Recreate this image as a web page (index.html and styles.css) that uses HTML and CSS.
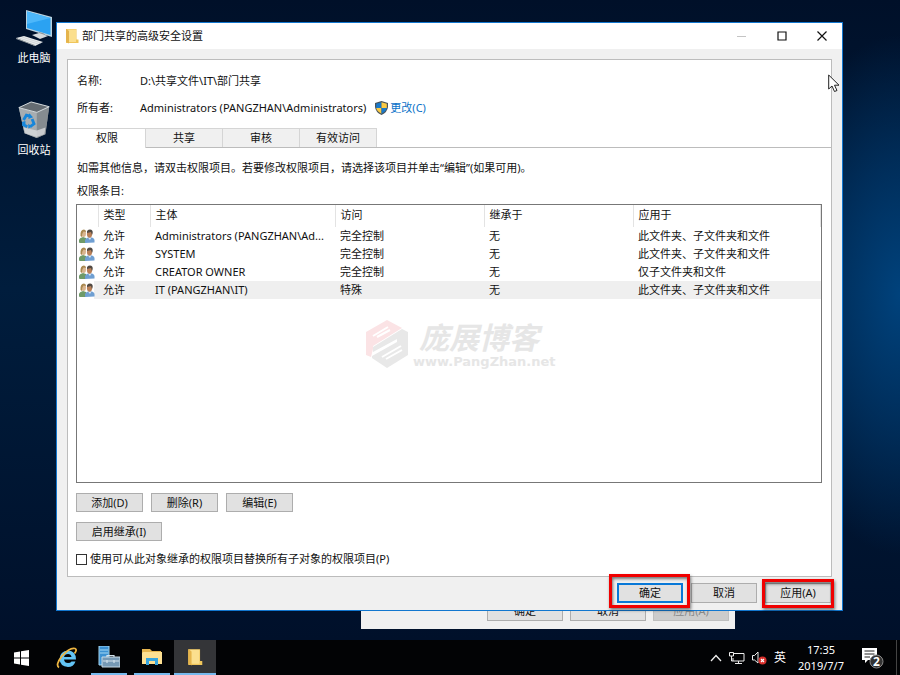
FILE: index.html
```html
<!DOCTYPE html>
<html lang="zh-CN">
<head>
  <meta charset="utf-8">
  <title>部门共享的高级安全设置</title>
  <link rel="stylesheet" href="styles.css">
</head>
<body>
  <svg class="defs" aria-hidden="true">
    <symbol id="users" viewBox="0 0 16 14">
      <path d="M0 13.500V10.500Q1 8.500 4 8L7 9V14H1Z" fill="#6f9a68"/>
      <ellipse cx="4.500" cy="4.500" rx="2.500" ry="3.500" fill="#d9b58f"/>
      <path d="M1.500 7Q1 .500 5 .500Q7 .800 7 3L4.500 2.500Q3 4 3 8Z" fill="#a98950"/>
      <path d="M6 14V11Q7 8.500 11 8Q15 8.500 15.500 11V13.500Z" fill="#6f9fd2"/>
      <path d="M9 8.500L11 11L12.500 8.300Z" fill="#dce8f4"/>
      <ellipse cx="10.500" cy="5" rx="2.600" ry="3.700" fill="#b98058"/>
      <path d="M8 4Q7.500 .500 11 .500Q14 .800 13.700 4L13 6L12 3Z" fill="#514942"/>
    </symbol>
    <symbol id="folder" viewBox="0 0 14 16">
      <path d="M1 1H11.500V11.500H13.500V15H1Z" fill="#f0c65b"/>
      <path d="M1 1L4 2V15.500L1 14Z" fill="#e5b44c"/>
      <path d="M2 1.500H11V14H4V3Z" fill="#fbdf8e"/>
    </symbol>
  </svg>

  <main class="desktop">
    <nav class="shortcuts">
      <a href="#" class="shortcut">
        <svg width="38" height="38" viewBox="0 0 38 38">
          <path d="M11 1L37 8V28L11 20Z" fill="#b9d2df"/>
          <path d="M12 2.500L35.500 9V26L12 19Z" fill="#2ba2f2"/>
          <path d="M12 2.500L35.500 9L12 15Z" fill="#4db7fa"/>
          <path d="M24 23L29 24.500V28L24 27Z" fill="#8b9297"/>
          <path d="M17 26L24 24L33 27L25 30Z" fill="#d6dadd"/>
          <path d="M1 29L9 27L28 33L20 37Z" fill="#e9eced"/>
          <path d="M4 29L23 35M7 28L26 34" stroke="#c3c8cb" stroke-width=".6"/>
          <path d="M1 29V30L20 37V36Z" fill="#8f979b"/>
        </svg>
        <span>此电脑</span>
      </a>
      <a href="#" class="shortcut">
        <svg width="34" height="38" viewBox="0 0 34 40">
          <path d="M1 7L14 1L33 6L29 35L20 39L7 34Z" fill="#8d9499"/>
          <path d="M1 7L20 12L20 39L7 34Z" fill="#a7adb1"/>
          <path d="M20 12L33 6L29 35L20 39Z" fill="#858c91"/>
          <path d="M1 7L14 1L33 6L20 12Z" fill="#656c72" stroke="#d7dddf"/>
          <path d="M6 28L20 31L29 28L28 35L20 38L8 34Z" fill="#d7dadd" opacity=".8"/>
          <g fill="none" stroke="#1786da" stroke-width="3">
            <path d="M6 20L9 15L13 16"/><path d="M15 19L17 24L13 27"/><path d="M10 27L6 25L6 22"/>
          </g>
          <path d="M12 13L16 17L11 19ZM15 27L11 29V24ZM4 22L8 21L8 25Z" fill="#1786da"/>
        </svg>
        <span>回收站</span>
      </a>
    </nav>

    <section class="window properties">
      <button type="button">确定</button>
      <button type="button">取消</button>
      <button type="button" disabled>应用(A)</button>
    </section>

    <section class="window security">
      <header class="titlebar">
        <svg width="14" height="16"><use href="#folder"/></svg>
        <h1>部门共享的高级安全设置</h1>
        <div class="caption">
          <button type="button" aria-label="最小化" disabled><svg width="10" height="10" viewBox="0 0 10 10"><path d="M0 5.500H9" stroke="#c4c4c4"/></svg></button>
          <button type="button" aria-label="最大化"><svg width="10" height="10" viewBox="0 0 10 10"><path d="M1 1H9V9H1Z" fill="none" stroke="#111" stroke-width="1.200"/></svg></button>
          <button type="button" aria-label="关闭"><svg width="10" height="10" viewBox="0 0 10 10"><path d="M.500 .500L9.500 9.500M9.500 .500L.500 9.500" stroke="#111" stroke-width="1.200"/></svg></button>
        </div>
      </header>

      <div class="panel">
        <dl class="info">
          <dt>名称:</dt>
          <dd>D:\共享文件\IT\部门共享</dd>
          <dt>所有者:</dt>
          <dd>
            Administrators (PANGZHAN\Administrators)
            <a href="#" class="change">
              <svg width="13" height="14" viewBox="0 0 13 14">
                <path d="M6.500 0L13 2V6Q12.500 11 6.500 14Q.500 11 0 6V2Z" fill="#49545b"/>
                <path d="M6.500 1.200L1.200 2.800V7H6.500Z" fill="#1979ca"/>
                <path d="M6.500 1.200L11.800 2.800V7H6.500Z" fill="#fbca43"/>
                <path d="M1.200 7H6.500V12.700Q2 10.500 1.200 7Z" fill="#fbca43"/>
                <path d="M11.800 7H6.500V12.700Q11 10.500 11.800 7Z" fill="#1979ca"/>
              </svg>更改(C)</a>
          </dd>
        </dl>

        <div class="tabs" role="tablist">
          <button type="button" role="tab" aria-selected="true">权限</button>
          <button type="button" role="tab">共享</button>
          <button type="button" role="tab">审核</button>
          <button type="button" role="tab">有效访问</button>
        </div>

        <div class="content">
          <p>如需其他信息，请双击权限项目。若要修改权限项目，请选择该项目并单击“编辑”(如果可用)。</p>
          <p>权限条目:</p>
          <div class="list">
            <table>
              <thead>
                <tr><th class="col-icon"></th><th class="col-type">类型</th><th class="col-name">主体</th><th class="col-mid">访问</th><th class="col-mid">继承于</th><th>应用于</th></tr>
              </thead>
              <tbody>
                <tr><td><svg width="16" height="14"><use href="#users"/></svg></td><td>允许</td><td>Administrators (PANGZHAN\Ad...</td><td>完全控制</td><td>无</td><td>此文件夹、子文件夹和文件</td></tr>
                <tr><td><svg width="16" height="14"><use href="#users"/></svg></td><td>允许</td><td>SYSTEM</td><td>完全控制</td><td>无</td><td>此文件夹、子文件夹和文件</td></tr>
                <tr><td><svg width="16" height="14"><use href="#users"/></svg></td><td>允许</td><td>CREATOR OWNER</td><td>完全控制</td><td>无</td><td>仅子文件夹和文件</td></tr>
                <tr class="selected"><td><svg width="16" height="14"><use href="#users"/></svg></td><td>允许</td><td>IT (PANGZHAN\IT)</td><td>特殊</td><td>无</td><td>此文件夹、子文件夹和文件</td></tr>
              </tbody>
            </table>
            <div class="watermark">
              <svg width="42" height="48" viewBox="0 0 42 48">
                <path d="M0 12L21 0L36 8L7 26V29L5 37L0 35Z" fill="#fbe3e5"/>
                <path d="M42 12V35L21 48L6 38V36L31 22V19L7 32V27L36 9Z" fill="#e8e8e8"/>
                <path d="M7 16L22 7M11 17L24 10" stroke="#fff" stroke-width="2"/>
                <path d="M16 37L35 26M20 39L36 30" stroke="#fff" stroke-width="2"/>
              </svg>
              <div>
                <strong>庞展博客</strong>
                <span>www.PangZhan.net</span>
              </div>
            </div>
          </div>

          <div class="actions">
            <button type="button">添加(D)</button>
            <button type="button">删除(R)</button>
            <button type="button">编辑(E)</button>
          </div>
          <div class="actions">
            <button type="button" class="wide">启用继承(I)</button>
          </div>
          <label class="replace"><input type="checkbox">使用可从此对象继承的权限项目替换所有子对象的权限项目(P)</label>
        </div>
      </div>

      <footer class="buttons">
        <span class="mark mark-ok"><button type="button" class="default">确定</button></span>
        <button type="button">取消</button>
        <span class="mark"><button type="button">应用(A)</button></span>
      </footer>
    </section>

    <svg class="cursor" width="13" height="19" viewBox="0 0 13 19">
      <path d="M.700 1V15L4 12L6.500 17.500L9 16.500L6.500 11.200H11Z" fill="#fff" stroke="#222"/>
    </svg>
  </main>

  <footer class="taskbar">
    <button type="button" class="task" aria-label="开始">
      <svg width="15" height="16" viewBox="0 0 15 16"><path d="M0 2.500L6 1.500V7.500H0ZM7 1.300L15 0V7.500H7ZM0 8.500H6V14.500L0 13.500ZM7 8.500H15V16L7 14.700Z" fill="#fff"/></svg>
    </button>
    <button type="button" class="task ie" aria-label="Internet Explorer">
      <svg width="22" height="22" viewBox="0 0 22 22">
        <path d="M20 12.500H8Q8.500 16 12 16Q14.500 16 15.500 14.500H19.500Q17.500 20 12 20Q4 19.500 3.500 12Q4 4 12 3.500Q20 4 20 12.500ZM8 10H15.500Q15 7 12 7Q8.700 7 8 10Z" fill="#63c4f5"/>
        <path d="M3 20.500Q-1 18 6 9Q14 0 19 1.500Q21.500 2.500 18.500 6.500" fill="none" stroke="#eeb642" stroke-width="1.800"/>
      </svg>
    </button>
    <button type="button" class="task open" aria-label="服务器管理器">
      <svg width="22" height="22" viewBox="0 0 22 22">
        <path d="M1 0H11V19H1Z" fill="#3c91d2"/>
        <path d="M1 0H11V19H1ZM2 4H10M2 7H10" fill="none" stroke="#a4d8f4"/>
        <path d="M4 11H22V21H4Z" fill="#7699b5" stroke="#c7d9e5"/>
        <path d="M9 11V9.500H16V11M5 15H21M9 14V17M16 14V17" fill="none" stroke="#d3e1eb" stroke-width="1.200"/>
      </svg>
    </button>
    <button type="button" class="task open" aria-label="文件资源管理器">
      <svg width="20" height="18" viewBox="0 0 20 18">
        <path d="M0 1H8L10 3H19V16H0Z" fill="#e7b64f"/>
        <path d="M1 4H20V16H0V5Z" fill="#fde092"/>
        <path d="M4 17V10H16V17H13V13H7V17Z" fill="#36a5df"/>
      </svg>
    </button>
    <button type="button" class="task open active" aria-label="文件夹">
      <svg width="16" height="18" viewBox="0 0 14 16"><use href="#folder"/></svg>
    </button>

    <div class="tray">
      <svg width="12" height="8" viewBox="0 0 12 8"><path d="M1 7L6 1.500L11 7" fill="none" stroke="#eee" stroke-width="1.300"/></svg>
      <svg width="16" height="14" viewBox="0 0 16 14"><path d="M5 2.500H15V10H4V7M9.500 10V12.500M6 12.500H13M.500 1.500H4.500V5H.500ZM2.500 5V10H4" fill="none" stroke="#eee"/></svg>
      <svg width="15" height="14" viewBox="0 0 15 14">
        <path d="M.500 4.500H2.500L6 1V12L2.500 9H.500Z" fill="none" stroke="#eee"/>
        <circle cx="10.500" cy="9.500" r="4" fill="#d9302c"/>
        <path d="M9 8L12 11M12 8L9 11" stroke="#fff" stroke-width="1.200"/>
      </svg>
      <span class="ime">英</span>
      <time class="clock" datetime="2019-07-07T17:35">17:35<br>2019/7/7</time>
      <svg class="notice" width="22" height="22" viewBox="0 0 22 22">
        <path d="M0 1H15V13H6L3 16V13H0Z" fill="#fff"/>
        <path d="M2.500 4H12.500M2.500 7H12.500M2.500 10H8" stroke="#222"/>
        <circle cx="14.500" cy="14.500" r="6.500" fill="#333" stroke="#888"/>
        <text x="14.500" y="19" text-anchor="middle">2</text>
      </svg>
    </div>
  </footer>
</body>
</html>
```

FILE: styles.css
```css
* {
  box-sizing: border-box;
}

body {
  min-height: 100vh;
  margin: 0;
  display: flex;
  flex-direction: column;
  background: #000;
  color: #111;
  font-family: "Noto Sans", "Noto Sans CJK SC", sans-serif;
  font-size: 11px;
  line-height: 16px;
}

button {
  padding: 0;
  border: 1px solid #adadad;
  background: #e1e1e1;
  color: inherit;
  font: inherit;
}

svg {
  display: block;
  flex: none;
}

.defs {
  position: absolute;
  width: 0;
  height: 0;
}

/* desktop */
.desktop {
  position: relative;
  flex: 1;
  background:
    radial-gradient(ellipse 130px 260px at 100% 46%, #00427c 0%, rgba(0, 60, 115, 0.6) 50%, transparent 100%),
    linear-gradient(180deg, #001029 0%, #001d3d 45%, #00102a 100%);
}

.shortcuts {
  width: 68px;
  padding-top: 9px;
  display: flex;
  flex-direction: column;
  gap: 35px;
}

.shortcut {
  display: flex;
  flex-direction: column;
  align-items: center;
  gap: 3px;
  color: #fff;
  text-decoration: none;
}

.window {
  position: absolute;
  background: #f0f0f0;
}

.properties {
  left: 361px;
  right: 165px;
  bottom: 11px;
  padding: 10px 6px 8px;
  display: flex;
  justify-content: flex-end;
  gap: 7px;
}

.properties button {
  width: 76px;
  height: 20px;
}

.properties button:disabled {
  background: #ccc;
  border-color: #bfbfbf;
  color: #888;
}

.security {
  top: 22px;
  right: 57px;
  bottom: 29px;
  left: 56px;
  border: 1px solid #1277cf;
  display: flex;
  flex-direction: column;
}

.titlebar {
  height: 26px;
  padding-left: 8px;
  display: flex;
  align-items: center;
  gap: 3px;
  background: #fff;
}

.titlebar h1 {
  margin: 0;
  flex: 1;
  font-size: 11px;
  font-weight: normal;
}

.caption {
  display: flex;
}

.caption button {
  width: 40px;
  height: 26px;
  display: flex;
  align-items: center;
  justify-content: center;
  border: 0;
  background: none;
}

.panel {
  flex: 1;
  margin: 10px 10px 0;
  border: 1px solid #bcbcbc;
  background: #fff;
  display: flex;
  flex-direction: column;
}

.info {
  margin: 0;
  padding: 13px 9px 12px;
  display: grid;
  grid-template-columns: 63px 1fr;
  row-gap: 11px;
}

.info dd {
  margin: 0;
  display: flex;
  gap: 9px;
}

.change {
  display: flex;
  align-items: center;
  gap: 2px;
  color: #0a72c8;
  text-decoration: none;
}

/* tabs */
.tabs {
  display: flex;
  border-bottom: 1px solid #bcbcbc;
}

.tabs button {
  width: 78px;
  height: 19px;
  margin-right: -1px;
  border-color: #d5d5d5;
  border-bottom: 0;
  background: #f0f0f0;
  line-height: 18px;
}

.tabs button[aria-selected="true"] {
  height: 20px;
  margin-bottom: -1px;
  padding-bottom: 2px;
  border-left-color: #fff;
  background: #fff;
}

.content {
  flex: 1;
  padding: 12px 9px 9px 8px;
  display: flex;
  flex-direction: column;
}

.content p {
  margin: 0 0 7px 1px;
}

.content p + p {
  margin-bottom: 5px;
}

.list {
  position: relative;
  flex: 1;
  margin-bottom: 10px;
  border: 1px solid #777;
}

table {
  width: 100%;
  table-layout: fixed;
  border-collapse: collapse;
}

th,
td {
  height: 18px;
  padding: 0 5px;
  font-weight: normal;
  text-align: left;
  white-space: nowrap;
}

th {
  height: 22px;
  padding-bottom: 2px;
  border-right: 1px solid #e3e3e3;
}

td:first-child {
  padding: 0 2px;
}

.col-icon {
  width: 21px;
}

.col-type {
  width: 52px;
}

.col-name {
  width: 185px;
}

.col-mid {
  width: 149px;
}

.selected {
  background: #efefef;
}

.selected td:first-child {
  background: linear-gradient(90deg, #fff 17px, #efefef 17px);
}

.watermark {
  position: absolute;
  top: 113px;
  left: 289px;
  display: flex;
  align-items: center;
  gap: 5px;
  color: #e6e6e6;
}

.watermark strong,
.watermark span {
  display: block;
}

.watermark strong {
  padding-left: 6px;
  font-family: "Noto Sans CJK SC", sans-serif;
  font-size: 30px;
  font-style: italic;
  line-height: 37px;
}

.watermark span {
  font: bold 13px/14px "DejaVu Sans", sans-serif;
}

.actions {
  margin-bottom: 10px;
  display: flex;
  gap: 8px;
}

.actions button {
  width: 67px;
  height: 19px;
  line-height: 17px;
}

.actions .wide {
  width: 86px;
}

.replace {
  display: flex;
  align-items: center;
  gap: 3px;
}

.replace input {
  appearance: none;
  width: 11px;
  height: 11px;
  margin: 0;
  border: 1px solid #333;
  background: #fff;
}

.buttons {
  padding: 6px 11px 7px;
  display: flex;
  justify-content: flex-end;
  gap: 8px;
}

.buttons button {
  width: 66px;
  height: 20px;
  line-height: 18px;
}

.buttons .default {
  border: 2px solid #0878d7;
  line-height: 16px;
}

/* red frames round the buttons to press */
.mark {
  position: relative;
  display: flex;
}

.mark::after {
  content: "";
  position: absolute;
  inset: -4px -3px -5px;
  border: 3px solid #f00000;
  box-shadow: 1px 2px 3px rgba(0, 0, 0, 0.5), inset 1px 2px 3px rgba(0, 0, 0, 0.5);
  pointer-events: none;
}

.mark-ok::after {
  inset: -9px -7px -5px -8px;
}

.cursor {
  position: absolute;
  top: 74px;
  left: 828px;
}

/* taskbar */
.taskbar {
  height: 35px;
  display: flex;
  background: #020305;
  color: #fff;
}

.task {
  width: 42px;
  display: flex;
  align-items: center;
  justify-content: center;
  border: 0;
  background: none;
}

.ie {
  width: 49px;
}

.open {
  width: 36px;
  margin-right: 7px;
  border-bottom: 2px solid #76b9ed;
}

.active {
  width: 42px;
  margin: 0 0 0 -3px;
  background: #343538;
}

.tray {
  margin-left: auto;
  margin-right: 3px;
  padding-right: 12px;
  display: flex;
  align-items: center;
  gap: 7px;
  border-right: 1px solid #444;
}

.ime {
  font-size: 12px;
}

.clock {
  width: 56px;
  text-align: center;
}

.notice {
  margin-left: 6px;
}

.notice text {
  fill: #fff;
  font-size: 12px;
  font-weight: bold;
}
```
